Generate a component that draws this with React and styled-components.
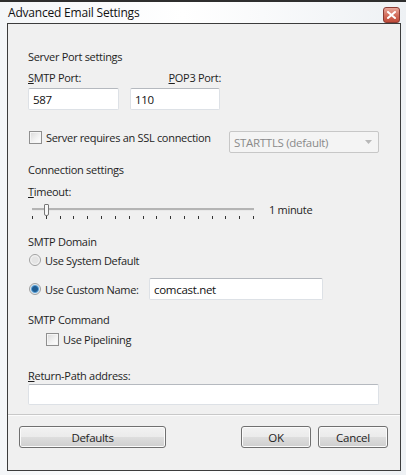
import React from "react";
import styled, { createGlobalStyle } from "styled-components";

const GlobalStyle = createGlobalStyle`
  html, body {
    margin: 0;
    padding: 0;
    background: #ffffff;
  }
  body {
    font-family: "Open Sans", "Noto Sans", sans-serif;
    font-size: 11px;
    letter-spacing: -0.3px;
    color: #1e1e1e;
  }
`;

const TICKS = 17;

const App = () => {
  return (
    <Window>
      <GlobalStyle />
      <TitleBar>
        <Title>Advanced Email Settings</Title>
        <CloseButton>
          <svg width="9" height="8" viewBox="0 0 9 8">
            <path d="M1 1 L8 7 M8 1 L1 7" stroke="#fff" strokeWidth="2" strokeLinecap="square" />
          </svg>
        </CloseButton>
      </TitleBar>

      <Panel>
        <Body>
          <SectionTitle top={25}>Server Port settings</SectionTitle>
          <PortLabels>
            <Label>
              <u>S</u>MTP Port:
            </Label>
            <Label>
              <u>P</u>OP3 Port:
            </Label>
          </PortLabels>
          <PortInputs>
            <TextBox width={91}>587</TextBox>
            <TextBox width={90}>110</TextBox>
          </PortInputs>

          <SslRow>
            <CheckLine>
              <CheckBox />
              <span>Server requires an SSL connection</span>
            </CheckLine>
            <Select>
              <span>STARTTLS (default)</span>
              <svg width="7" height="4" viewBox="0 0 7 4">
                <path d="M0 0 H7 L3.5 4 Z" fill="#b8b8b8" />
              </svg>
            </Select>
          </SslRow>

          <SectionTitle top={9}>Connection settings</SectionTitle>
          <SectionTitle top={6}>
            <u>T</u>imeout:
          </SectionTitle>
          <SliderRow>
            <Slider>
              <Track />
              <Thumb />
              <Ticks>
                {Array.from({ length: TICKS }).map((_, i) => (
                  <Tick key={i} />
                ))}
              </Ticks>
            </Slider>
            <SliderValue>1 minute</SliderValue>
          </SliderRow>

          <SectionTitle top={8}>SMTP Domain</SectionTitle>
          <RadioLine top={2}>
            <Radio />
            <span>Use System Default</span>
          </RadioLine>
          <CustomRow>
            <RadioLine top={0}>
              <Radio checked />
              <span>Use Custom Name:</span>
            </RadioLine>
            <TextBox width={174}>comcast.net</TextBox>
          </CustomRow>

          <SectionTitle top={12}>SMTP Command</SectionTitle>
          <CheckLine indent={18} top={5}>
            <CheckBox />
            <span>Use Pipelining</span>
          </CheckLine>

          <SectionTitle top={22}>
            <u>R</u>eturn-Path address:
          </SectionTitle>
          <TextBox width={351} height={21} top={0} />
        </Body>

        <Footer>
          <Button width={147}>Defaults</Button>
          <ButtonGroup>
            <Button width={70}>OK</Button>
            <Button width={70}>Cancel</Button>
          </ButtonGroup>
        </Footer>
      </Panel>
    </Window>
  );
};

const Window = styled.div`
  width: 406px;
  height: 475px;
  box-sizing: border-box;
  border-top: 2px solid #2e2e2e;
  background: linear-gradient(90deg, #f4f6f8 0%, #ffffff 45%, #eef1f4 100%);
  display: flex;
  flex-direction: column;
  overflow: hidden;
`;

const TitleBar = styled.div`
  height: 21px;
  display: flex;
  align-items: center;
  justify-content: space-between;
  padding: 0 6px 0 8px;
`;

const Title = styled.div`
  font-size: 12px;
  letter-spacing: -0.2px;
  color: #111;
`;

const CloseButton = styled.div`
  width: 15px;
  height: 14px;
  margin-top: 5px;
  border: 1px solid #8a3b33;
  border-radius: 3px;
  background: linear-gradient(180deg, #e9a99d 0%, #d4705f 50%, #c04a38 100%);
  display: flex;
  align-items: center;
  justify-content: center;
`;

const Panel = styled.div`
  margin: 0 5px 0 7px;
  height: 446px;
  border: 1px solid #3c3c3c;
  background: #f0f0f0;
  display: flex;
  flex-direction: column;
`;

const Body = styled.div`
  flex: 1;
  padding: 0 21px 0 20px;
  display: flex;
  flex-direction: column;
`;

const SectionTitle = styled.div`
  height: 16px;
  line-height: 16px;
  margin-top: ${(p) => p.top}px;
  white-space: nowrap;
`;

const Label = styled.div`
  height: 16px;
  line-height: 16px;
`;

const PortLabels = styled.div`
  width: 193px;
  margin-top: 5px;
  display: flex;
  justify-content: space-between;
`;

const PortInputs = styled.div`
  margin-top: 2px;
  display: flex;
  gap: 11px;
`;

const TextBox = styled.div`
  width: ${(p) => p.width}px;
  height: ${(p) => p.height || 22}px;
  margin-top: ${(p) => p.top || 0}px;
  box-sizing: border-box;
  background: #fff;
  border: 1px solid #dde1e6;
  border-top-color: #b5b9bf;
  border-radius: 2px;
  padding: 0 4px;
  display: flex;
  align-items: center;
  font-size: 11.5px;
  color: #111;
`;

const SslRow = styled.div`
  margin-top: 21px;
  display: flex;
  justify-content: space-between;
  align-items: flex-start;
`;

const CheckLine = styled.div`
  display: flex;
  align-items: center;
  gap: 4px;
  height: 13px;
  margin-top: ${(p) => p.top || 0}px;
  margin-left: ${(p) => p.indent || 1}px;
  white-space: nowrap;
  span {
    line-height: 13px;
  }
`;

const CheckBox = styled.div`
  width: 13px;
  height: 13px;
  box-sizing: border-box;
  border: 1px solid #8f8f8f;
  background: linear-gradient(135deg, #d9d9d9 0%, #f4f4f4 60%, #ffffff 100%);
  box-shadow: inset 0 0 0 1px #f5f5f5;
`;

const Select = styled.div`
  width: 150px;
  height: 22px;
  box-sizing: border-box;
  border: 1px solid #c7c7c7;
  border-radius: 2px;
  background: #f4f4f4;
  color: #8a8a8a;
  padding: 0 6px 0 4px;
  display: flex;
  align-items: center;
  justify-content: space-between;
  font-size: 11.5px;
`;

const SliderRow = styled.div`
  margin-top: 4px;
  display: flex;
  align-items: flex-start;
  height: 22px;
`;

const Slider = styled.div`
  position: relative;
  width: 222px;
  height: 20px;
  margin-left: 4px;
`;

const Track = styled.div`
  position: absolute;
  left: 0;
  right: 0;
  top: 4px;
  height: 2px;
  background: #b4b4b4;
  border-bottom: 1px solid #e8e8e8;
`;

const Thumb = styled.div`
  position: absolute;
  left: 12px;
  top: 0;
  width: 3px;
  height: 10px;
  background: #f8f8f8;
  border: 1px solid #777;
  border-radius: 1px 1px 2px 2px;
`;

const Ticks = styled.div`
  position: absolute;
  left: 0;
  right: 0;
  top: 12px;
  display: flex;
  justify-content: space-between;
`;

const Tick = styled.div`
  width: 1px;
  height: 3px;
  background: #333;
`;

const SliderValue = styled.div`
  margin-left: 15px;
  margin-top: -2px;
  line-height: 16px;
`;

const RadioLine = styled.div`
  display: flex;
  align-items: center;
  gap: 4px;
  height: 16px;
  margin-top: ${(p) => p.top}px;
  margin-left: 1px;
  white-space: nowrap;
`;

const Radio = styled.div`
  width: 12px;
  height: 12px;
  box-sizing: border-box;
  border-radius: 50%;
  border: 1px solid #a0a0a0;
  background: ${(p) =>
    p.checked
      ? "radial-gradient(circle, #1f5d93 0 2.5px, #5aa0d6 3.5px, #dfe8ee 4.5px)"
      : "radial-gradient(circle, #e4e4e4 0 3px, #f8f8f8 5px)"};
`;

const CustomRow = styled.div`
  margin-top: 10px;
  display: flex;
  align-items: center;
  & > div:first-child {
    width: 120px;
  }
`;

const Footer = styled.div`
  height: 44px;
  border-top: 1px solid #c8c8c8;
  box-shadow: inset 0 1px 0 #fcfcfc;
  padding: 11px 12px 0 11px;
  display: flex;
  justify-content: space-between;
  align-items: flex-start;
`;

const ButtonGroup = styled.div`
  display: flex;
  gap: 7px;
`;

const Button = styled.div`
  width: ${(p) => p.width}px;
  height: 22px;
  box-sizing: border-box;
  border: 1px solid #707070;
  border-radius: 3px;
  background: linear-gradient(180deg, #f2f2f2 0%, #ebebeb 48%, #dddddd 52%, #cfcfcf 100%);
  box-shadow: inset 0 0 0 1px #fbfbfb;
  display: flex;
  align-items: center;
  justify-content: center;
  font-size: 11.5px;
`;

export default App;
